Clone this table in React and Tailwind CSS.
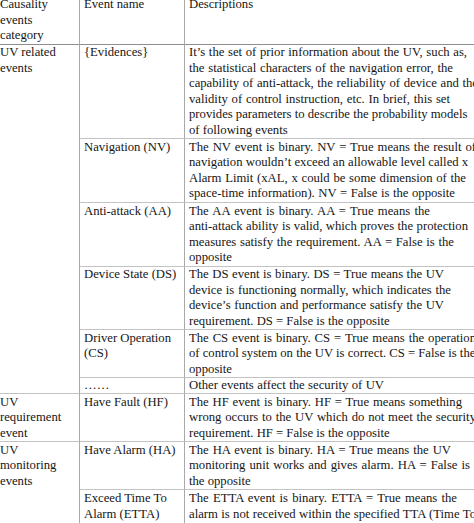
import React from "react";

const groups = [
  {
    cat: ["UV related", "events"],
    rows: [
      {
        name: ["{Evidences}"],
        desc: [
          ["It\u2019s the set of prior information about the UV, such as,", 278],
          ["the statistical characters of the navigation error, the", 264],
          ["capability of anti-attack, the reliability of device and the", 289],
          ["validity of control instruction, etc. In brief, this set", 261],
          ["provides parameters to describe the probability models", 277],
          ["of following events"],
        ],
      },
      {
        name: ["Navigation (NV)"],
        desc: [
          ["The NV event is binary. NV = True means the result of", 287],
          ["navigation wouldn\u2019t exceed an allowable level called x", 274],
          ["Alarm Limit (xAL, x could be some dimension of the", 277],
          ["space-time information). NV = False is the opposite", 266],
        ],
      },
      {
        name: ["Anti-attack (AA)"],
        desc: [
          ["The AA event is binary. AA = True means the", 241],
          ["anti-attack ability is valid, which proves the protection", 279],
          ["measures satisfy the requirement. AA = False is the", 265],
          ["opposite"],
        ],
      },
      {
        name: ["Device State (DS)"],
        desc: [
          ["The DS event is binary. DS = True means the UV", 255],
          ["device is functioning normally, which indicates the", 262],
          ["device\u2019s function and performance satisfy the UV", 255],
          ["requirement. DS = False is the opposite"],
        ],
      },
      {
        name: ["Driver Operation", "(CS)"],
        desc: [
          ["The CS event is binary. CS = True means the operation", 287],
          ["of control system on the UV is correct. CS = False is the", 285],
          ["opposite"],
        ],
      },
      {
        name: ["\u2026\u2026"],
        tight: true,
        desc: [["Other events affect the security of UV", 195]],
      },
    ],
  },
  {
    cat: ["UV", "requirement", "event"],
    rows: [
      {
        name: ["Have Fault (HF)"],
        desc: [
          ["The HF event is binary. HF = True means something", 273],
          ["wrong occurs to the UV which do not meet the security", 287],
          ["requirement. HF = False is the opposite"],
        ],
      },
    ],
  },
  {
    cat: ["UV", "monitoring", "events"],
    rows: [
      {
        name: ["Have Alarm (HA)"],
        desc: [
          ["The HA event is binary. HA = True means the UV", 262],
          ["monitoring unit works and gives alarm. HA = False is", 281],
          ["the opposite"],
        ],
      },
      {
        name: ["Exceed Time To", "Alarm (ETTA)"],
        desc: [
          ["The ETTA event is binary. ETTA = True means the", 268],
          ["alarm is not received within the specified TTA (Time To", 287],
          ["Alarm)"],
        ],
      },
    ],
  },
];

function Lines({ lines }) {
  return lines.map((l, i) => (
    <div key={i} className="whitespace-nowrap">
      {l}
    </div>
  ));
}

function DescLines({ lines }) {
  return lines.map(([t, w], i) =>
    w ? (
      <div
        key={i}
        className="w-max [text-align:justify] [text-align-last:justify]"
        style={{ minWidth: `${w}px` }}
      >
        {t}
      </div>
    ) : (
      <div key={i} className="whitespace-nowrap">
        {t}
      </div>
    )
  );
}

export default function App() {
  let rowIndex = 2; // grid row 1 is header
  const cells = [];
  groups.forEach((g, gi) => {
    const start = rowIndex;
    const span = g.rows.length;
    cells.push(
      <div
        key={`c${gi}`}
        className="col-start-1 border-r border-b border-[#a9a9a9] border-b-[#c3c3c3] pl-[4px] pt-[0.7px]"
        style={{ gridRow: `${start} / span ${span}` }}
      >
        <Lines lines={g.cat} />
      </div>
    );
    g.rows.forEach((r, ri) => {
      const row = rowIndex + ri;
      const pad = r.tight ? "pt-0 leading-[14.6px]" : "pt-[0.7px]";
      cells.push(
        <div
          key={`n${gi}-${ri}`}
          className={`col-start-2 border-r border-b border-[#a9a9a9] border-b-[#c3c3c3] pl-[4px] ${pad}`}
          style={{ gridRow: `${row}` }}
        >
          <Lines lines={r.name} />
        </div>
      );
      cells.push(
        <div
          key={`d${gi}-${ri}`}
          className={`col-start-3 border-b border-[#c3c3c3] pl-[4px] ${pad}`}
          style={{ gridRow: `${row}` }}
        >
          <DescLines lines={r.desc} />
        </div>
      );
    });
    rowIndex += span;
  });

  return (
    <div className="w-[474px] h-[523px] overflow-hidden bg-white">
      <div className="ml-[-4px] mt-[-4px] grid grid-cols-[84px_105px_310px] font-['Liberation_Serif',serif] text-[12.7px] leading-[15.5px] text-[#161616]">
        <div className="col-start-1 row-start-1 border-r border-[#a9a9a9] border-b-[1.5px] border-b-[#8e8e8e] pl-[4px] pt-[1px]">
          <div>Causality</div>
          <div>events</div>
          <div>category</div>
        </div>
        <div className="col-start-2 row-start-1 border-r border-[#a9a9a9] border-b-[1.5px] border-b-[#8e8e8e] pl-[4px] pt-[1px]">
          Event name
        </div>
        <div className="col-start-3 row-start-1 border-b-[1.5px] border-[#8e8e8e] pl-[4px] pt-[1px]">
          Descriptions
        </div>
        {cells}
      </div>
    </div>
  );
}
